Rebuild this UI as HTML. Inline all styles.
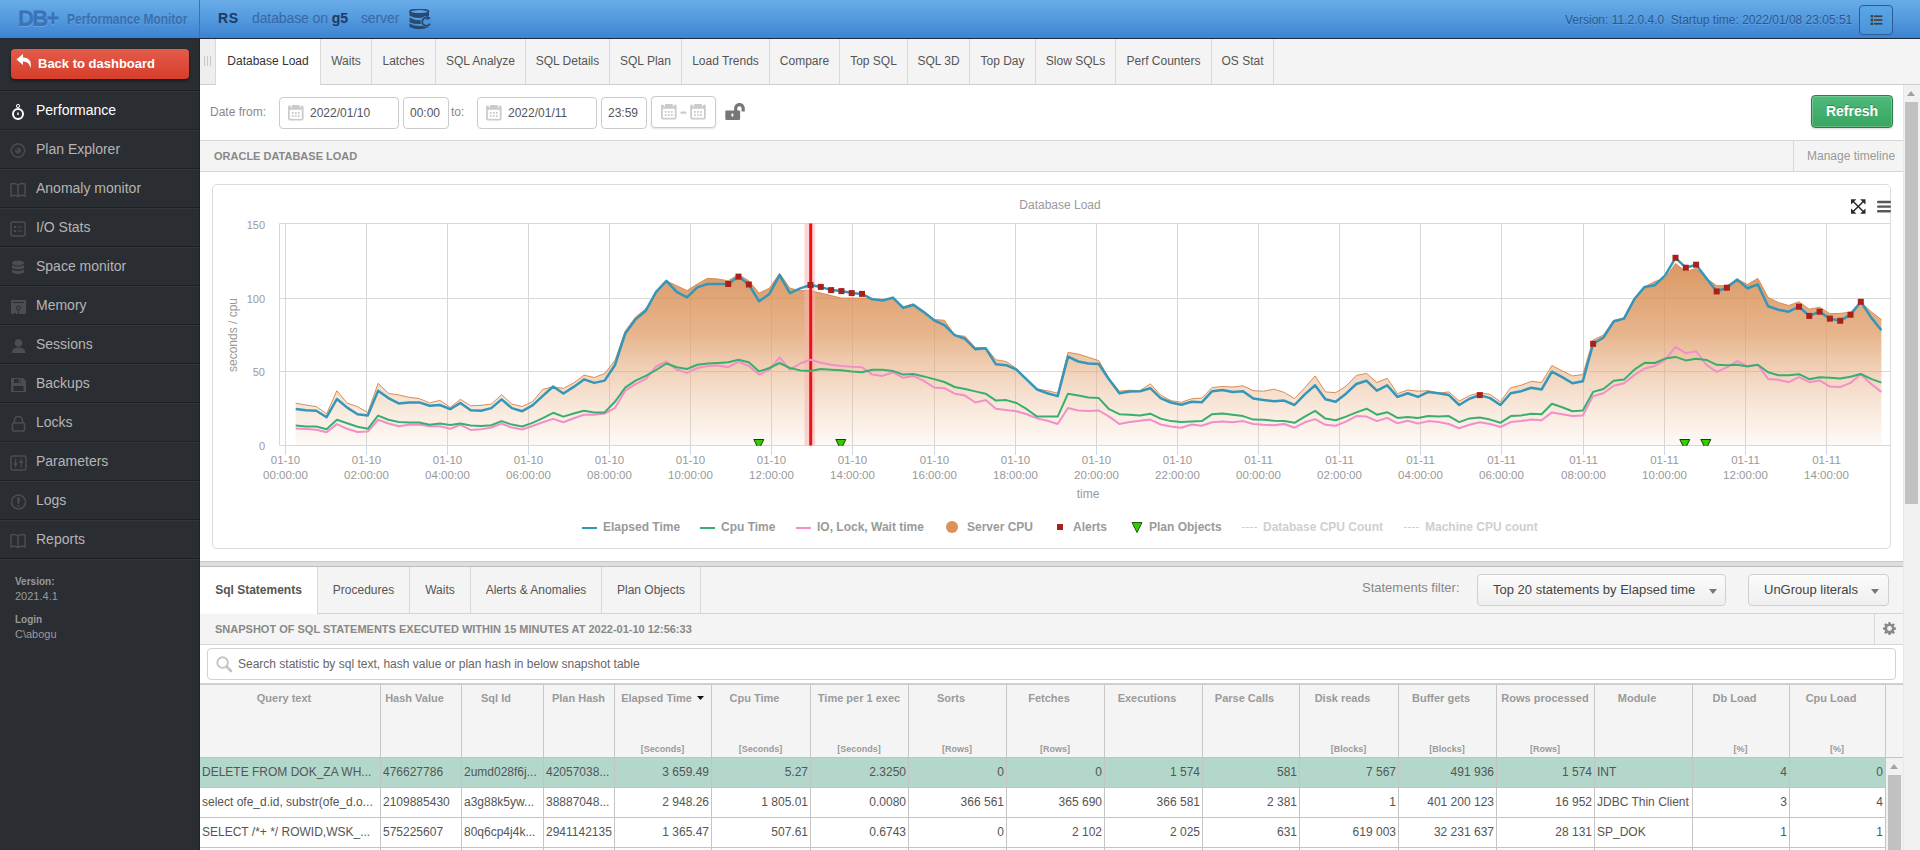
<!DOCTYPE html>
<html><head><meta charset="utf-8">
<style>
*{box-sizing:border-box;margin:0;padding:0}
html,body{width:1920px;height:850px;overflow:hidden;background:#fff;font-family:"Liberation Sans",sans-serif;}
.abs{position:absolute}
#hdr{position:absolute;left:0;top:0;width:1920px;height:39px;background:linear-gradient(#68ade7,#559cdf 45%,#3d82d1);border-bottom:1px solid #1c2b3b;}
#hdr .div{position:absolute;left:199px;top:0;width:1px;height:38px;background:#3f72aa}
.logo1{position:absolute;left:18px;top:6px;font-size:22px;font-weight:bold;color:#3a73b8;letter-spacing:-1.6px;text-shadow:0 1px 0 rgba(255,255,255,0.18),0 -1px 0 rgba(20,50,110,0.25)}
.logo2{position:absolute;left:67px;top:11px;font-size:14.5px;font-weight:bold;color:#3a6fae;transform:scaleX(0.825);transform-origin:0 0;white-space:nowrap;text-shadow:0 1px 0 rgba(255,255,255,0.12)}
.rs{position:absolute;left:218px;top:10px;font-size:14px;font-weight:bold;color:#1d3a60;letter-spacing:0.6px}
.dbon{position:absolute;left:252px;top:10px;font-size:14px;color:#3868a6;letter-spacing:-0.1px;white-space:nowrap}
.dbon b{color:#1d3a60}
.ver{position:absolute;left:1565px;top:12px;font-size:13px;color:#2a5891;transform:scaleX(0.923);transform-origin:0 0;white-space:nowrap;text-shadow:0 1px 0 rgba(255,255,255,0.15)}
.hbtn{position:absolute;left:1859px;top:5px;width:34px;height:30px;border:1px solid #2d5d96;border-radius:4px;background:linear-gradient(#5aa6e6,#4a94da)}
#side{position:absolute;left:0;top:39px;width:200px;height:811px;background:#2a2d32;border-right:1px solid #1f2226}
.back{position:absolute;left:11px;top:10px;width:178px;height:30px;border-radius:4px;background:linear-gradient(#e35c4a,#d63d2b);box-shadow:0 2px 3px rgba(0,0,0,0.45);color:#fff;font-weight:bold;font-size:13px}
.back span{position:absolute;left:27px;top:7px}
.mi{position:absolute;left:0;width:199px;height:39px;border-top:1px solid #1d1f23;box-shadow:inset 0 1px 0 #33363b;color:#b5b5b5;font-size:14px}
.mi span{position:absolute;left:36px;top:11px}
.mi svg{position:absolute;left:10px;top:12px}
.mi.act{color:#fff}
.sver{position:absolute;left:15px;font-size:10px;color:#999;font-weight:bold}
.sval{position:absolute;left:15px;font-size:11px;color:#999}
#tabs{position:absolute;left:200px;top:39px;width:1720px;height:46px;background:#f4f4f4;border-bottom:1px solid #cfcfcf}
.tb{position:absolute;top:0;height:45px;border-right:1px solid #d9d9d9;font-size:12px;color:#555;text-align:center;line-height:45px}
.tb.act{background:#fff;color:#333;height:46px}
#tool{position:absolute;left:200px;top:85px;width:1703px;height:56px;background:#fff;border-bottom:1px solid #d6d6d6}
.inp{position:absolute;top:12px;height:32px;border:1px solid #cbcbcb;border-radius:4px;background:#fff;font-size:12px;color:#555}
.lbl{position:absolute;font-size:12px;color:#888}
.refresh{position:absolute;left:1611px;top:10px;width:82px;height:33px;border:1px solid #2b7d4b;border-radius:4px;background:linear-gradient(#4dba7b,#39a560);text-shadow:0 -1px 0 rgba(0,0,0,0.25);color:#fff;font-weight:bold;font-size:14px;text-align:center;line-height:31px;box-shadow:inset 0 0 0 1px rgba(255,255,255,0.22),0 1px 2px rgba(0,0,0,0.15)}
#sech{position:absolute;left:200px;top:141px;width:1703px;height:31px;background:#f4f4f4;border-bottom:1px solid #d6d6d6}
.sect{position:absolute;left:14px;top:9px;font-size:11px;font-weight:bold;color:#888;white-space:nowrap}
.mng{position:absolute;left:1593px;top:0;width:110px;height:30px;border-left:1px solid #d9d9d9;font-size:12px;color:#999;padding-left:13px;line-height:31px}
#chartbox{position:absolute;left:212px;top:184px;width:1679px;height:365px;border:1px solid #dcdcdc;border-radius:5px;background:#fff}
.chart{position:absolute;left:0;top:0}
.legend{position:absolute;top:520px;font-size:12px;font-weight:bold;color:#9a9a9a;white-space:nowrap}
#divbar{position:absolute;left:200px;top:561px;width:1703px;height:6px;background:#dedede;border-top:1px solid #c9c9c9;border-bottom:1px solid #bdbdbd}
#btabs{position:absolute;left:200px;top:567px;width:1703px;height:47px;background:#f4f4f4;border-bottom:1px solid #d4d4d4}
.bt{position:absolute;top:0;height:46px;border-right:1px solid #d9d9d9;font-size:12px;color:#555;text-align:center;line-height:46px}
.bt.act{background:#fff;font-weight:bold;height:47px}
.sel{position:absolute;top:7px;height:32px;border:1px solid #cfcfcf;border-radius:4px;background:linear-gradient(#fbfbfb,#efefef);font-size:13px;color:#444;line-height:30px}
.caret{position:absolute;top:13.5px;width:0;height:0;border-left:4px solid transparent;border-right:4px solid transparent;border-top:5px solid #777}
#snap{position:absolute;left:200px;top:614px;width:1703px;height:31px;background:#f4f4f4;border-bottom:1px solid #d6d6d6}
#search{position:absolute;left:207px;top:648px;width:1689px;height:32px;border:1px solid #d3d3d3;border-radius:4px;background:#fff;font-size:12px;color:#666}
#thead{position:absolute;left:200px;top:683px;width:1703px;height:75px;background:#f4f4f4;border-top:2px solid #cfcfcf;border-bottom:1px solid #c2c2c2}
.th{position:absolute;top:0;height:72px;border-right:1px solid #c6c6c6;font-size:11px;font-weight:bold;color:#9a9a9a;text-align:center}
.th .u{position:absolute;left:0;right:0;top:59px;font-size:9px}
.th .t{position:absolute;left:0;right:0;top:7px;padding-right:12px;white-space:nowrap}
.row{position:absolute;left:200px;width:1686px;height:30px;border-bottom:1px solid #c4c4c4;font-size:12px;color:#555}
.row.g{background:#b3d7cb}
.td{position:absolute;top:0;height:29px;border-right:1px solid #c4c4c4;line-height:28px;white-space:nowrap;overflow:hidden;padding:0 2px}
.td.r{text-align:right}
#vscroll{position:absolute;left:1903px;top:85px;width:17px;height:765px;background:#f1f1f1;border-left:1px solid #e8e8e8}
#vthumb{position:absolute;left:1905px;top:102px;width:13px;height:402px;background:#c1c1c1}
.arr{position:absolute;width:0;height:0;border-left:4px solid transparent;border-right:4px solid transparent;border-bottom:5px solid #a3a3a3}
#tscroll{position:absolute;left:1886px;top:758px;width:17px;height:92px;background:#f1f1f1}
#tthumb{position:absolute;left:1888px;top:775px;width:13px;height:75px;background:#c1c1c1}
</style></head>
<body>
<div id="hdr"><div class="div"></div>
<div class="logo1">DB+</div><div class="logo2">Performance Monitor</div>
<div class="rs">RS</div>
<div class="dbon">database on <b>g5</b><span style="margin-left:13px">server</span></div>
<svg class="abs" style="left:409px;top:9px" width="23" height="21" viewBox="0 0 23 21"><g fill="#274a70"><ellipse cx="10.2" cy="2.6" rx="9.4" ry="2.3" fill="none" stroke="#274a70" stroke-width="1.6"/><path d="M0.5 3 V6.8 Q10.2 11.2 20 6.8 V3 Q10.2 7.4 0.5 3Z"/><path d="M0.5 8.4 V13.2 Q5.5 15.4 12 15 V11.2 Q5.5 11.6 0.5 8.4Z"/><path d="M0.5 14.4 V18 Q10.2 22.6 20 18 V16 Q15 17.4 12 17 Q5.5 17.4 0.5 14.4Z"/></g><circle cx="17.2" cy="12.6" r="5.6" fill="#4d93da"/><path d="M21 14.6 A4.1 4.1 0 1 1 19.2 9" fill="none" stroke="#274a70" stroke-width="1.9"/><path d="M17.6 6.6 L21.8 9 L17.6 11.2Z" fill="#274a70"/></svg>
<div class="ver">Version: 11.2.0.4.0&nbsp; Startup time: 2022/01/08 23:05:51</div>
<div class="hbtn"><svg class="abs" style="left:10px;top:9px" width="13" height="10" viewBox="0 0 14 12"><g fill="#404040"><rect x="0" y="0" width="3" height="3"/><rect x="4" y="0.5" width="10" height="2"/><rect x="0" y="4.5" width="3" height="3"/><rect x="4" y="5" width="10" height="2"/><rect x="0" y="9" width="3" height="3"/><rect x="4" y="9.5" width="10" height="2"/></g></svg></div>
</div>

<div id="side">
<div class="back"><svg class="abs" style="left:5px;top:4px" width="17" height="16" viewBox="0 0 17 16"><path d="M7 1 L0.5 6.5 L7 12 V8.5 Q13 8 14.5 15 Q16.5 5 7 4.5Z" fill="#fff"/></svg><span>Back to dashboard</span></div>
<div class="mi act" style="top:51px"><svg width="18" height="18" viewBox="0 0 18 18"><circle cx="8" cy="11" r="5" fill="none" stroke="#fff" stroke-width="2"/><circle cx="8" cy="3" r="1.6" fill="none" stroke="#fff" stroke-width="1"/><rect x="7.3" y="9.5" width="1.4" height="2.5" fill="#fff"/></svg><span>Performance</span></div>
<div class="mi" style="top:90px"><svg width="18" height="18" viewBox="0 0 18 18"><path d="M1 8.5 Q2.8 1.8 8 1.8 Q13.2 1.8 15 8.5 Q13.2 15.2 8 15.2 Q2.8 15.2 1 8.5Z" fill="none" stroke="#45484d" stroke-width="1.7"/><circle cx="8" cy="8.5" r="3" fill="#45484d"/><circle cx="7" cy="7.4" r="0.9" fill="#2a2d32"/></svg><span>Plan Explorer</span></div>
<div class="mi" style="top:129px"><svg width="18" height="18" viewBox="0 0 18 18"><path d="M1 3 Q4.5 1.5 8 4 Q11.5 1.5 15 3 V15 Q11.5 13.5 8 15.5 Q4.5 13.5 1 15Z M8 4 V15.5" fill="none" stroke="#4a4d52" stroke-width="1.5"/></svg><span>Anomaly monitor</span></div>
<div class="mi" style="top:168px"><svg width="18" height="18" viewBox="0 0 18 18"><rect x="1" y="2" width="14" height="14" rx="2" fill="none" stroke="#4a4d52" stroke-width="1.5"/><rect x="4" y="6" width="2" height="2" fill="#4a4d52"/><rect x="4" y="10" width="2" height="2" fill="#4a4d52"/><rect x="7.5" y="6.5" width="4.5" height="1" fill="#4a4d52"/><rect x="7.5" y="10.5" width="4.5" height="1" fill="#4a4d52"/></svg><span>I/O Stats</span></div>
<div class="mi" style="top:207px"><svg width="18" height="18" viewBox="0 0 18 18"><g fill="#4a4d52"><ellipse cx="8" cy="4" rx="6" ry="2.5"/><path d="M2 6 Q8 9 14 6 V9 Q8 12 2 9Z"/><path d="M2 10.5 Q8 13.5 14 10.5 V13.5 Q8 16.5 2 13.5Z"/></g></svg><span>Space monitor</span></div>
<div class="mi" style="top:246px"><svg width="18" height="18" viewBox="0 0 18 18"><rect x="1" y="2" width="15" height="14" rx="1" fill="#4a4d52"/><rect x="3" y="4" width="11" height="1" fill="#2a2d32"/><circle cx="8.5" cy="10" r="2" fill="none" stroke="#2a2d32" stroke-width="1"/><rect x="4" y="15" width="2" height="1" fill="#2a2d32"/><rect x="8" y="13" width="1" height="3" fill="#2a2d32"/></svg><span>Memory</span></div>
<div class="mi" style="top:285px"><svg width="18" height="18" viewBox="0 0 18 18"><circle cx="8.5" cy="6" r="3.8" fill="#4a4d52"/><path d="M1.5 16 Q2 10.5 8.5 10.5 Q15 10.5 15.5 16Z" fill="#4a4d52"/></svg><span>Sessions</span></div>
<div class="mi" style="top:324px"><svg width="18" height="18" viewBox="0 0 18 18"><path d="M1 2 H13 L16 5 V16 H1Z" fill="#4a4d52"/><rect x="4" y="3" width="7" height="4" fill="#2a2d32"/><rect x="8.5" y="3.5" width="2" height="3" fill="#4a4d52"/><rect x="3.5" y="10" width="10" height="5" fill="#2a2d32"/></svg><span>Backups</span></div>
<div class="mi" style="top:363px"><svg width="18" height="18" viewBox="0 0 18 18"><path d="M4.5 8 V5.5 A4 4 0 0 1 12.5 5.5 V8" fill="none" stroke="#4a4d52" stroke-width="1.6"/><rect x="2.5" y="8" width="12" height="8" rx="1" fill="none" stroke="#4a4d52" stroke-width="1.6"/></svg><span>Locks</span></div>
<div class="mi" style="top:402px"><svg width="18" height="18" viewBox="0 0 18 18"><rect x="1" y="2" width="15" height="14" rx="2" fill="none" stroke="#4a4d52" stroke-width="1.5"/><rect x="5" y="4.5" width="1.2" height="9" fill="#4a4d52"/><rect x="10.5" y="4.5" width="1.2" height="9" fill="#4a4d52"/><rect x="4" y="9" width="3.2" height="2" fill="#4a4d52"/><rect x="9.5" y="7" width="3.2" height="2" fill="#4a4d52"/></svg><span>Parameters</span></div>
<div class="mi" style="top:441px"><svg width="18" height="18" viewBox="0 0 18 18"><circle cx="8.5" cy="9" r="7" fill="none" stroke="#4a4d52" stroke-width="1.5"/><path d="M7 4.5 H10 L9.2 11 H7.8Z" fill="#4a4d52"/><circle cx="8.5" cy="13" r="1" fill="#4a4d52"/></svg><span>Logs</span></div>
<div class="mi" style="top:480px"><svg width="18" height="18" viewBox="0 0 18 18"><path d="M1 3 Q4.5 1.5 8 4 Q11.5 1.5 15 3 V15 Q11.5 13.5 8 15.5 Q4.5 13.5 1 15Z M8 4 V15.5" fill="none" stroke="#4a4d52" stroke-width="1.5"/></svg><span>Reports</span></div>
<div class="mi" style="top:519px;height:2px"></div>
<div class="sver" style="top:537px">Version:</div>
<div class="sval" style="top:551px">2021.4.1</div>
<div class="sver" style="top:575px">Login</div>
<div class="sval" style="top:589px">C\abogu</div>
</div>

<div id="tabs">
<div class="tb" style="left:0;width:16px;background:#eeeeee"><svg class="abs" style="left:4px;top:17px" width="7" height="10"><g fill="#c8c8c8"><rect x="0" y="0" width="1" height="10"/><rect x="3" y="0" width="1" height="10"/><rect x="6" y="0" width="1" height="10"/></g></svg></div>
<div class="tb act" style="left:16px;width:105px">Database Load</div>
<div class="tb" style="left:121px;width:51px">Waits</div>
<div class="tb" style="left:172px;width:64px">Latches</div>
<div class="tb" style="left:236px;width:90px">SQL Analyze</div>
<div class="tb" style="left:326px;width:84px">SQL Details</div>
<div class="tb" style="left:410px;width:72px">SQL Plan</div>
<div class="tb" style="left:482px;width:88px">Load Trends</div>
<div class="tb" style="left:570px;width:70px">Compare</div>
<div class="tb" style="left:640px;width:68px">Top SQL</div>
<div class="tb" style="left:708px;width:62px">SQL 3D</div>
<div class="tb" style="left:770px;width:66px">Top Day</div>
<div class="tb" style="left:836px;width:80px">Slow SQLs</div>
<div class="tb" style="left:916px;width:96px">Perf Counters</div>
<div class="tb" style="left:1012px;width:62px">OS Stat</div>
</div>

<div id="tool">
<div class="lbl" style="left:10px;top:20px">Date from:</div>
<div class="inp" style="left:79px;width:120px"><svg class="abs" style="left:8px;top:7px" width="16" height="16" viewBox="0 0 16 16"><rect x="0" y="0" width="15.6" height="15.6" rx="2.6" fill="#cbcbcb"/><rect x="1.8" y="4.8" width="12" height="9" fill="#fff"/><g fill="#cbcbcb"><rect x="3.8" y="7" width="1.8" height="1.8"/><rect x="6.9" y="7" width="1.8" height="1.8"/><rect x="9.9" y="7" width="1.8" height="1.8"/><rect x="3.8" y="10.1" width="1.8" height="1.8"/><rect x="6.9" y="10.1" width="1.8" height="1.8"/><rect x="9.9" y="10.1" width="1.8" height="1.8"/></g><g fill="#fff"><rect x="1.6" y="0" width="2" height="1"/><rect x="12" y="0" width="2" height="1"/></g><g fill="#fff"><rect x="3" y="0" width="0.9" height="2.6"/><rect x="11.7" y="0" width="0.9" height="2.6"/></g></svg><span class="abs" style="left:30px;top:8px">2022/01/10</span></div>
<div class="inp" style="left:203px;width:46px"><span class="abs" style="left:6px;top:8px">00:00</span></div>
<div class="lbl" style="left:251px;top:20px">to:</div>
<div class="inp" style="left:277px;width:120px"><svg class="abs" style="left:8px;top:7px" width="16" height="16" viewBox="0 0 16 16"><rect x="0" y="0" width="15.6" height="15.6" rx="2.6" fill="#cbcbcb"/><rect x="1.8" y="4.8" width="12" height="9" fill="#fff"/><g fill="#cbcbcb"><rect x="3.8" y="7" width="1.8" height="1.8"/><rect x="6.9" y="7" width="1.8" height="1.8"/><rect x="9.9" y="7" width="1.8" height="1.8"/><rect x="3.8" y="10.1" width="1.8" height="1.8"/><rect x="6.9" y="10.1" width="1.8" height="1.8"/><rect x="9.9" y="10.1" width="1.8" height="1.8"/></g><g fill="#fff"><rect x="1.6" y="0" width="2" height="1"/><rect x="12" y="0" width="2" height="1"/></g><g fill="#fff"><rect x="3" y="0" width="0.9" height="2.6"/><rect x="11.7" y="0" width="0.9" height="2.6"/></g></svg><span class="abs" style="left:30px;top:8px">2022/01/11</span></div>
<div class="inp" style="left:401px;width:46px"><span class="abs" style="left:6px;top:8px">23:59</span></div>
<div class="inp" style="left:451px;width:65px;top:11px;box-shadow:0 1px 2px rgba(0,0,0,0.12)"><svg class="abs" style="left:9px;top:7px" width="46" height="17" viewBox="0 0 46 17"><g transform="translate(0 0)"><rect x="0" y="0" width="15.6" height="15.6" rx="2.6" fill="#cbcbcb"/><rect x="1.8" y="4.8" width="12" height="9" fill="#fff"/><g fill="#cbcbcb"><rect x="3.8" y="7" width="1.8" height="1.8"/><rect x="6.9" y="7" width="1.8" height="1.8"/><rect x="9.9" y="7" width="1.8" height="1.8"/><rect x="3.8" y="10.1" width="1.8" height="1.8"/><rect x="6.9" y="10.1" width="1.8" height="1.8"/><rect x="9.9" y="10.1" width="1.8" height="1.8"/></g><g fill="#fff"><rect x="1.6" y="0" width="2" height="1"/><rect x="12" y="0" width="2" height="1"/><rect x="3" y="0" width="0.9" height="2.6"/><rect x="11.7" y="0" width="0.9" height="2.6"/></g></g><g transform="translate(29.2 0)"><rect x="0" y="0" width="15.6" height="15.6" rx="2.6" fill="#cbcbcb"/><rect x="1.8" y="4.8" width="12" height="9" fill="#fff"/><g fill="#cbcbcb"><rect x="3.8" y="7" width="1.8" height="1.8"/><rect x="6.9" y="7" width="1.8" height="1.8"/><rect x="9.9" y="7" width="1.8" height="1.8"/><rect x="3.8" y="10.1" width="1.8" height="1.8"/><rect x="6.9" y="10.1" width="1.8" height="1.8"/><rect x="9.9" y="10.1" width="1.8" height="1.8"/></g><g fill="#fff"><rect x="1.6" y="0" width="2" height="1"/><rect x="12" y="0" width="2" height="1"/><rect x="3" y="0" width="0.9" height="2.6"/><rect x="11.7" y="0" width="0.9" height="2.6"/></g></g><path d="M19 8.7 L20.2 7.6 H24.6 L25.8 8.7 L24.6 9.8 H20.2Z" fill="#cbcbcb"/></svg></div>
<svg class="abs" style="left:525px;top:18px" width="21" height="18" viewBox="0 0 21 18"><path d="M10.7 8.2 V5.3 A3.75 3.75 0 0 1 18.2 5.3 V8.6" fill="none" stroke="#777" stroke-width="3.2"/><rect x="0.3" y="7.6" width="14.8" height="9.3" rx="0.8" fill="#777"/><ellipse cx="7.4" cy="12" rx="1.1" ry="1.8" fill="#fff"/></svg>
<div class="refresh">Refresh</div>
</div>

<div id="sech"><div class="sect">ORACLE DATABASE LOAD</div><div class="mng">Manage timeline</div></div>

<div id="chartbox"></div>
<svg class="chart" width="1920" height="850" viewBox="0 0 1920 850">
<defs>
<linearGradient id="og" gradientUnits="userSpaceOnUse" x1="0" y1="223" x2="0" y2="445">
<stop offset="0" stop-color="#cf7f40" stop-opacity="0.95"/>
<stop offset="0.5" stop-color="#df9c66" stop-opacity="0.75"/>
<stop offset="1" stop-color="#f0c8a8" stop-opacity="0.12"/>
</linearGradient>
<clipPath id="pc"><rect x="279.5" y="215" width="1610.5" height="231"/></clipPath>
</defs>
<g stroke="#d8d8d8" stroke-width="1"><line x1="285.5" y1="223.5" x2="285.5" y2="445.5"/><line x1="366.5" y1="223.5" x2="366.5" y2="445.5"/><line x1="447.5" y1="223.5" x2="447.5" y2="445.5"/><line x1="528.5" y1="223.5" x2="528.5" y2="445.5"/><line x1="609.5" y1="223.5" x2="609.5" y2="445.5"/><line x1="690.5" y1="223.5" x2="690.5" y2="445.5"/><line x1="771.5" y1="223.5" x2="771.5" y2="445.5"/><line x1="852.5" y1="223.5" x2="852.5" y2="445.5"/><line x1="934.5" y1="223.5" x2="934.5" y2="445.5"/><line x1="1015.5" y1="223.5" x2="1015.5" y2="445.5"/><line x1="1096.5" y1="223.5" x2="1096.5" y2="445.5"/><line x1="1177.5" y1="223.5" x2="1177.5" y2="445.5"/><line x1="1258.5" y1="223.5" x2="1258.5" y2="445.5"/><line x1="1339.5" y1="223.5" x2="1339.5" y2="445.5"/><line x1="1420.5" y1="223.5" x2="1420.5" y2="445.5"/><line x1="1501.5" y1="223.5" x2="1501.5" y2="445.5"/><line x1="1583.5" y1="223.5" x2="1583.5" y2="445.5"/><line x1="1664.5" y1="223.5" x2="1664.5" y2="445.5"/><line x1="1745.5" y1="223.5" x2="1745.5" y2="445.5"/><line x1="1826.5" y1="223.5" x2="1826.5" y2="445.5"/><line x1="279.5" y1="223.5" x2="1890" y2="223.5"/><line x1="279.5" y1="298.5" x2="1890" y2="298.5"/><line x1="279.5" y1="371.5" x2="1890" y2="371.5"/><line x1="279.5" y1="445.5" x2="1890" y2="445.5"/>
<line x1="279.5" y1="223.5" x2="279.5" y2="445.5"/></g>
<g stroke="#ccd6eb" stroke-width="1"><line x1="285.5" y1="446" x2="285.5" y2="455"/><line x1="366.5" y1="446" x2="366.5" y2="455"/><line x1="447.5" y1="446" x2="447.5" y2="455"/><line x1="528.5" y1="446" x2="528.5" y2="455"/><line x1="609.5" y1="446" x2="609.5" y2="455"/><line x1="690.5" y1="446" x2="690.5" y2="455"/><line x1="771.5" y1="446" x2="771.5" y2="455"/><line x1="852.5" y1="446" x2="852.5" y2="455"/><line x1="934.5" y1="446" x2="934.5" y2="455"/><line x1="1015.5" y1="446" x2="1015.5" y2="455"/><line x1="1096.5" y1="446" x2="1096.5" y2="455"/><line x1="1177.5" y1="446" x2="1177.5" y2="455"/><line x1="1258.5" y1="446" x2="1258.5" y2="455"/><line x1="1339.5" y1="446" x2="1339.5" y2="455"/><line x1="1420.5" y1="446" x2="1420.5" y2="455"/><line x1="1501.5" y1="446" x2="1501.5" y2="455"/><line x1="1583.5" y1="446" x2="1583.5" y2="455"/><line x1="1664.5" y1="446" x2="1664.5" y2="455"/><line x1="1745.5" y1="446" x2="1745.5" y2="455"/><line x1="1826.5" y1="446" x2="1826.5" y2="455"/></g>
<g clip-path="url(#pc)">
<path d="M295.7 403.2 L306.0 405.0 L316.3 406.6 L326.6 413.8 L336.9 390.7 L347.2 403.2 L357.5 406.6 L367.8 412.6 L378.1 383.3 L388.4 393.4 L398.7 394.9 L409.0 397.3 L419.3 398.6 L429.6 402.9 L439.9 400.4 L450.2 407.3 L460.4 399.4 L470.7 405.8 L481.0 405.3 L491.3 404.1 L501.6 394.7 L511.9 404.1 L522.2 406.5 L532.5 401.8 L542.8 389.3 L553.1 386.9 L563.4 388.4 L573.7 382.9 L584.0 375.2 L594.3 377.5 L604.6 373.5 L614.9 360.6 L625.2 331.2 L635.5 317.1 L645.8 308.8 L656.1 293.5 L666.4 280.8 L676.7 285.7 L687.0 290.6 L697.3 284.0 L707.6 278.3 L717.9 279.0 L728.2 280.8 L738.5 274.6 L748.8 280.8 L759.1 293.1 L769.4 288.2 L779.6 273.3 L789.9 288.2 L800.2 290.6 L810.5 290.6 L820.8 293.1 L831.1 295.6 L841.4 298.1 L851.7 298.1 L862.0 298.1 L872.3 298.8 L882.6 299.3 L892.9 299.3 L903.2 306.7 L913.5 303.7 L923.8 311.6 L934.1 319.5 L944.4 320.3 L954.7 335.1 L965.0 336.3 L975.3 347.5 L985.6 347.5 L995.9 359.8 L1006.2 361.5 L1016.5 368.5 L1026.8 379.6 L1037.1 389.0 L1047.4 390.7 L1057.7 393.2 L1068.0 352.4 L1078.3 354.1 L1088.5 357.3 L1098.8 360.6 L1109.1 378.3 L1119.4 391.2 L1129.7 390.2 L1140.0 390.7 L1150.3 383.8 L1160.6 395.1 L1170.9 400.6 L1181.2 402.3 L1191.5 398.8 L1201.8 398.1 L1212.1 387.5 L1222.4 386.5 L1232.7 387.0 L1243.0 385.8 L1253.3 390.7 L1263.6 391.2 L1273.9 389.2 L1284.2 392.4 L1294.5 398.6 L1304.8 387.7 L1315.1 375.9 L1325.4 391.9 L1335.7 392.7 L1346.0 386.2 L1356.3 375.4 L1366.6 373.4 L1376.9 382.5 L1387.2 378.3 L1397.5 393.7 L1407.7 390.0 L1418.0 391.2 L1428.3 390.7 L1438.6 393.2 L1448.9 391.9 L1459.2 401.1 L1469.5 395.6 L1479.8 392.7 L1490.1 394.4 L1500.4 401.8 L1510.7 387.7 L1521.0 385.3 L1531.3 381.3 L1541.6 382.5 L1551.9 365.5 L1562.2 370.9 L1572.5 375.9 L1582.8 374.6 L1593.1 340.0 L1603.4 335.1 L1613.7 320.3 L1624.0 317.8 L1634.3 298.1 L1644.6 286.9 L1654.9 281.5 L1665.2 278.3 L1675.5 263.5 L1685.8 271.6 L1696.1 268.4 L1706.4 278.3 L1716.7 285.7 L1726.9 285.7 L1737.2 279.1 L1747.5 284.5 L1757.8 278.3 L1768.1 297.4 L1778.4 302.5 L1788.7 305.5 L1799.0 301.8 L1809.3 309.2 L1819.6 307.2 L1829.9 313.7 L1840.2 313.4 L1850.5 312.2 L1860.8 301.8 L1871.1 311.7 L1881.4 319.6 L1881.4 445.2 L295.7 445.2 Z" fill="url(#og)" stroke="none"/>
<path d="M295.7 403.2 L306.0 405.0 L316.3 406.6 L326.6 413.8 L336.9 390.7 L347.2 403.2 L357.5 406.6 L367.8 412.6 L378.1 383.3 L388.4 393.4 L398.7 394.9 L409.0 397.3 L419.3 398.6 L429.6 402.9 L439.9 400.4 L450.2 407.3 L460.4 399.4 L470.7 405.8 L481.0 405.3 L491.3 404.1 L501.6 394.7 L511.9 404.1 L522.2 406.5 L532.5 401.8 L542.8 389.3 L553.1 386.9 L563.4 388.4 L573.7 382.9 L584.0 375.2 L594.3 377.5 L604.6 373.5 L614.9 360.6 L625.2 331.2 L635.5 317.1 L645.8 308.8 L656.1 293.5 L666.4 280.8 L676.7 285.7 L687.0 290.6 L697.3 284.0 L707.6 278.3 L717.9 279.0 L728.2 280.8 L738.5 274.6 L748.8 280.8 L759.1 293.1 L769.4 288.2 L779.6 273.3 L789.9 288.2 L800.2 290.6 L810.5 290.6 L820.8 293.1 L831.1 295.6 L841.4 298.1 L851.7 298.1 L862.0 298.1 L872.3 298.8 L882.6 299.3 L892.9 299.3 L903.2 306.7 L913.5 303.7 L923.8 311.6 L934.1 319.5 L944.4 320.3 L954.7 335.1 L965.0 336.3 L975.3 347.5 L985.6 347.5 L995.9 359.8 L1006.2 361.5 L1016.5 368.5 L1026.8 379.6 L1037.1 389.0 L1047.4 390.7 L1057.7 393.2 L1068.0 352.4 L1078.3 354.1 L1088.5 357.3 L1098.8 360.6 L1109.1 378.3 L1119.4 391.2 L1129.7 390.2 L1140.0 390.7 L1150.3 383.8 L1160.6 395.1 L1170.9 400.6 L1181.2 402.3 L1191.5 398.8 L1201.8 398.1 L1212.1 387.5 L1222.4 386.5 L1232.7 387.0 L1243.0 385.8 L1253.3 390.7 L1263.6 391.2 L1273.9 389.2 L1284.2 392.4 L1294.5 398.6 L1304.8 387.7 L1315.1 375.9 L1325.4 391.9 L1335.7 392.7 L1346.0 386.2 L1356.3 375.4 L1366.6 373.4 L1376.9 382.5 L1387.2 378.3 L1397.5 393.7 L1407.7 390.0 L1418.0 391.2 L1428.3 390.7 L1438.6 393.2 L1448.9 391.9 L1459.2 401.1 L1469.5 395.6 L1479.8 392.7 L1490.1 394.4 L1500.4 401.8 L1510.7 387.7 L1521.0 385.3 L1531.3 381.3 L1541.6 382.5 L1551.9 365.5 L1562.2 370.9 L1572.5 375.9 L1582.8 374.6 L1593.1 340.0 L1603.4 335.1 L1613.7 320.3 L1624.0 317.8 L1634.3 298.1 L1644.6 286.9 L1654.9 281.5 L1665.2 278.3 L1675.5 263.5 L1685.8 271.6 L1696.1 268.4 L1706.4 278.3 L1716.7 285.7 L1726.9 285.7 L1737.2 279.1 L1747.5 284.5 L1757.8 278.3 L1768.1 297.4 L1778.4 302.5 L1788.7 305.5 L1799.0 301.8 L1809.3 309.2 L1819.6 307.2 L1829.9 313.7 L1840.2 313.4 L1850.5 312.2 L1860.8 301.8 L1871.1 311.7 L1881.4 319.6" fill="none" stroke="#d98c55" stroke-width="1"/>
<rect x="804.5" y="223.5" width="10.6" height="222" fill="#f7b5b5" fill-opacity="0.55"/>
<rect x="809.2" y="223.5" width="3" height="222" fill="#ee1111"/>
<path d="M295.7 428.6 L306.0 429.0 L316.3 429.7 L326.6 432.3 L336.9 424.1 L347.2 428.8 L357.5 432.0 L367.8 431.5 L378.1 419.8 L388.4 423.5 L398.7 426.2 L409.0 424.8 L419.3 424.6 L429.6 426.2 L439.9 426.2 L450.2 428.8 L460.4 424.8 L470.7 429.9 L481.0 429.3 L491.3 427.6 L501.6 423.6 L511.9 427.6 L522.2 429.5 L532.5 426.0 L542.8 422.2 L553.1 418.9 L563.4 422.2 L573.7 418.2 L584.0 414.7 L594.3 414.7 L604.6 413.5 L614.9 408.1 L625.2 390.7 L635.5 384.1 L645.8 378.9 L656.1 366.5 L666.4 361.5 L676.7 369.7 L687.0 372.9 L697.3 368.0 L707.6 366.0 L717.9 365.5 L728.2 367.2 L738.5 361.8 L748.8 366.0 L759.1 374.6 L769.4 369.7 L779.6 357.3 L789.9 369.7 L800.2 363.5 L810.5 359.8 L820.8 362.8 L831.1 364.8 L841.4 366.0 L851.7 366.7 L862.0 367.2 L872.3 374.6 L882.6 375.9 L892.9 372.2 L903.2 377.8 L913.5 375.9 L923.8 380.8 L934.1 387.5 L944.4 388.2 L954.7 393.7 L965.0 395.6 L975.3 402.5 L985.6 400.1 L995.9 408.7 L1006.2 410.0 L1016.5 411.2 L1026.8 414.2 L1037.1 418.4 L1047.4 420.8 L1057.7 424.0 L1068.0 408.0 L1078.3 410.5 L1088.5 410.9 L1098.8 410.5 L1109.1 416.6 L1119.4 424.0 L1129.7 422.1 L1140.0 420.8 L1150.3 419.6 L1160.6 424.5 L1170.9 426.5 L1181.2 427.7 L1191.5 424.5 L1201.8 425.8 L1212.1 422.3 L1222.4 421.6 L1232.7 422.3 L1243.0 421.1 L1253.3 424.0 L1263.6 424.8 L1273.9 425.3 L1284.2 424.0 L1294.5 427.7 L1304.8 422.3 L1315.1 419.1 L1325.4 424.8 L1335.7 425.8 L1346.0 421.6 L1356.3 416.1 L1366.6 416.6 L1376.9 421.1 L1387.2 417.9 L1397.5 423.3 L1407.7 420.8 L1418.0 423.5 L1428.3 421.1 L1438.6 422.1 L1448.9 424.0 L1459.2 428.2 L1469.5 424.8 L1479.8 422.3 L1490.1 424.0 L1500.4 427.0 L1510.7 422.1 L1521.0 421.1 L1531.3 419.6 L1541.6 420.3 L1551.9 412.4 L1562.2 414.2 L1572.5 416.1 L1582.8 415.4 L1593.1 396.1 L1603.4 393.2 L1613.7 385.8 L1624.0 383.3 L1634.3 375.1 L1644.6 368.5 L1654.9 366.0 L1665.2 359.8 L1675.5 346.8 L1685.8 353.2 L1696.1 351.2 L1706.4 364.8 L1716.7 371.8 L1726.9 367.3 L1737.2 361.1 L1747.5 366.1 L1757.8 364.8 L1768.1 378.9 L1778.4 379.7 L1788.7 382.2 L1799.0 377.2 L1809.3 382.2 L1819.6 380.4 L1829.9 386.6 L1840.2 387.1 L1850.5 382.9 L1860.8 374.2 L1871.1 383.9 L1881.4 392.0" fill="none" stroke="#f28fcb" stroke-width="2" stroke-linejoin="round"/>
<path d="M295.7 425.4 L306.0 426.5 L316.3 426.5 L326.6 429.3 L336.9 419.8 L347.2 423.3 L357.5 426.7 L367.8 428.8 L378.1 415.6 L388.4 419.8 L398.7 421.9 L409.0 422.5 L419.3 422.5 L429.6 424.8 L439.9 423.5 L450.2 425.1 L460.4 423.5 L470.7 425.4 L481.0 426.0 L491.3 425.3 L501.6 421.1 L511.9 424.6 L522.2 426.5 L532.5 422.9 L542.8 418.2 L553.1 412.8 L563.4 416.6 L573.7 413.5 L584.0 410.7 L594.3 412.4 L604.6 412.4 L614.9 401.8 L625.2 387.6 L635.5 380.6 L645.8 375.9 L656.1 370.0 L666.4 363.5 L676.7 367.2 L687.0 369.0 L697.3 364.8 L707.6 363.5 L717.9 363.0 L728.2 362.3 L738.5 359.8 L748.8 362.3 L759.1 371.4 L769.4 368.0 L779.6 363.0 L789.9 368.0 L800.2 370.4 L810.5 370.9 L820.8 369.0 L831.1 369.7 L841.4 370.2 L851.7 371.4 L862.0 372.2 L872.3 369.7 L882.6 369.7 L892.9 370.9 L903.2 374.6 L913.5 374.1 L923.8 376.4 L934.1 379.1 L944.4 382.0 L954.7 387.0 L965.0 389.0 L975.3 391.4 L985.6 393.7 L995.9 400.6 L1006.2 400.1 L1016.5 403.0 L1026.8 409.2 L1037.1 416.6 L1047.4 416.6 L1057.7 416.6 L1068.0 393.7 L1078.3 395.6 L1088.5 397.4 L1098.8 398.1 L1109.1 409.2 L1119.4 414.2 L1129.7 414.7 L1140.0 415.4 L1150.3 413.7 L1160.6 418.6 L1170.9 421.1 L1181.2 422.1 L1191.5 421.6 L1201.8 421.1 L1212.1 414.2 L1222.4 413.4 L1232.7 414.7 L1243.0 416.1 L1253.3 419.6 L1263.6 419.8 L1273.9 420.8 L1284.2 421.1 L1294.5 422.8 L1304.8 416.6 L1315.1 410.9 L1325.4 418.6 L1335.7 420.3 L1346.0 416.6 L1356.3 412.4 L1366.6 408.7 L1376.9 414.7 L1387.2 412.2 L1397.5 417.9 L1407.7 417.1 L1418.0 417.9 L1428.3 416.1 L1438.6 416.6 L1448.9 416.1 L1459.2 422.1 L1469.5 418.4 L1479.8 417.4 L1490.1 419.6 L1500.4 422.8 L1510.7 416.1 L1521.0 415.4 L1531.3 413.7 L1541.6 414.2 L1551.9 403.8 L1562.2 407.2 L1572.5 411.2 L1582.8 410.5 L1593.1 391.9 L1603.4 389.0 L1613.7 380.8 L1624.0 379.6 L1634.3 369.7 L1644.6 362.8 L1654.9 363.0 L1665.2 358.6 L1675.5 356.9 L1685.8 360.4 L1696.1 358.7 L1706.4 359.9 L1716.7 364.8 L1726.9 365.3 L1737.2 364.8 L1747.5 366.6 L1757.8 364.8 L1768.1 372.3 L1778.4 375.2 L1788.7 375.2 L1799.0 374.2 L1809.3 379.2 L1819.6 377.2 L1829.9 377.7 L1840.2 378.4 L1850.5 376.7 L1860.8 374.0 L1871.1 378.9 L1881.4 382.6" fill="none" stroke="#3aae6e" stroke-width="2" stroke-linejoin="round"/>
<path d="M295.7 408.9 L306.0 410.3 L316.3 410.8 L326.6 417.2 L336.9 399.0 L347.2 407.6 L357.5 414.2 L367.8 415.6 L378.1 390.7 L388.4 398.1 L398.7 403.4 L409.0 402.6 L419.3 402.4 L429.6 405.7 L439.9 405.0 L450.2 409.2 L460.4 402.9 L470.7 410.3 L481.0 410.7 L491.3 408.1 L501.6 399.4 L511.9 408.1 L522.2 411.2 L532.5 405.3 L542.8 395.9 L553.1 386.5 L563.4 393.5 L573.7 386.9 L584.0 379.4 L594.3 382.9 L604.6 380.6 L614.9 365.3 L625.2 333.5 L635.5 319.4 L645.8 310.7 L656.1 291.9 L666.4 280.8 L676.7 291.9 L687.0 297.3 L697.3 287.4 L707.6 284.0 L717.9 284.0 L728.2 284.0 L738.5 276.6 L748.8 284.5 L759.1 301.3 L769.4 293.9 L779.6 275.1 L789.9 293.1 L800.2 288.4 L810.5 285.0 L820.8 286.9 L831.1 290.1 L841.4 291.1 L851.7 293.1 L862.0 293.9 L872.3 299.3 L882.6 300.5 L892.9 297.6 L903.2 307.9 L913.5 305.0 L923.8 312.1 L934.1 320.3 L944.4 325.2 L954.7 335.1 L965.0 338.8 L975.3 349.2 L985.6 348.2 L995.9 364.3 L1006.2 365.2 L1016.5 369.7 L1026.8 379.6 L1037.1 389.5 L1047.4 393.2 L1057.7 396.1 L1068.0 356.6 L1078.3 361.5 L1088.5 363.5 L1098.8 364.0 L1109.1 379.6 L1119.4 393.2 L1129.7 391.4 L1140.0 391.2 L1150.3 388.2 L1160.6 398.1 L1170.9 402.5 L1181.2 404.8 L1191.5 401.8 L1201.8 402.3 L1212.1 391.2 L1222.4 390.0 L1232.7 391.9 L1243.0 391.2 L1253.3 398.6 L1263.6 400.1 L1273.9 401.3 L1284.2 400.6 L1294.5 405.0 L1304.8 394.4 L1315.1 385.3 L1325.4 399.3 L1335.7 401.8 L1346.0 393.7 L1356.3 384.0 L1366.6 380.8 L1376.9 390.7 L1387.2 385.3 L1397.5 396.9 L1407.7 393.2 L1418.0 396.9 L1428.3 391.9 L1438.6 393.2 L1448.9 395.1 L1459.2 405.0 L1469.5 398.8 L1479.8 395.1 L1490.1 398.1 L1500.4 405.0 L1510.7 393.2 L1521.0 391.2 L1531.3 387.7 L1541.6 389.5 L1551.9 371.7 L1562.2 377.1 L1572.5 383.3 L1582.8 381.3 L1593.1 343.8 L1603.4 337.6 L1613.7 321.5 L1624.0 318.6 L1634.3 299.3 L1644.6 286.9 L1654.9 285.2 L1665.2 275.3 L1675.5 257.8 L1685.8 267.7 L1696.1 264.7 L1706.4 278.3 L1716.7 291.4 L1726.9 287.7 L1737.2 279.6 L1747.5 288.2 L1757.8 284.5 L1768.1 306.3 L1778.4 309.7 L1788.7 311.7 L1799.0 306.7 L1809.3 315.9 L1819.6 311.7 L1829.9 318.6 L1840.2 320.8 L1850.5 314.7 L1860.8 301.8 L1871.1 317.4 L1881.4 330.2" fill="none" stroke="#3497ba" stroke-width="2.5" stroke-linejoin="round"/>
<g fill="#a8211b"><rect x="725.2" y="281.0" width="6" height="6"/><rect x="735.5" y="273.6" width="6" height="6"/><rect x="745.8" y="281.5" width="6" height="6"/><rect x="807.5" y="282.0" width="6" height="6"/><rect x="817.8" y="283.9" width="6" height="6"/><rect x="828.1" y="287.1" width="6" height="6"/><rect x="838.4" y="288.1" width="6" height="6"/><rect x="848.7" y="290.1" width="6" height="6"/><rect x="859.0" y="290.9" width="6" height="6"/><rect x="1476.8" y="392.1" width="6" height="6"/><rect x="1590.1" y="340.8" width="6" height="6"/><rect x="1672.5" y="254.8" width="6" height="6"/><rect x="1682.8" y="264.7" width="6" height="6"/><rect x="1693.1" y="261.7" width="6" height="6"/><rect x="1713.7" y="288.4" width="6" height="6"/><rect x="1723.9" y="284.7" width="6" height="6"/><rect x="1796.0" y="303.7" width="6" height="6"/><rect x="1806.3" y="312.9" width="6" height="6"/><rect x="1816.6" y="308.7" width="6" height="6"/><rect x="1826.9" y="315.6" width="6" height="6"/><rect x="1837.2" y="317.8" width="6" height="6"/><rect x="1847.5" y="311.7" width="6" height="6"/><rect x="1857.8" y="298.8" width="6" height="6"/></g>
<g fill="#33cc00" stroke="#173d0e" stroke-width="1"><path d="M753.8 439.5 L763.8 439.5 L758.8 449.5 Z"/><path d="M835.8 439.5 L845.8 439.5 L840.8 449.5 Z"/><path d="M1679.8 439.5 L1689.8 439.5 L1684.8 449.5 Z"/><path d="M1700.8 439.5 L1710.8 439.5 L1705.8 449.5 Z"/></g>
</g>
<g font-family="Liberation Sans, sans-serif" font-size="11" fill="#999"><text x="265" y="229.0" text-anchor="end">150</text><text x="265" y="302.8" text-anchor="end">100</text><text x="265" y="376.0" text-anchor="end">50</text><text x="265" y="449.8" text-anchor="end">0</text></g>
<g font-family="Liberation Sans, sans-serif" font-size="11.5" fill="#999"><text x="285.5" y="464" text-anchor="middle">01-10</text><text x="285.5" y="479" text-anchor="middle">00:00:00</text><text x="366.5" y="464" text-anchor="middle">01-10</text><text x="366.5" y="479" text-anchor="middle">02:00:00</text><text x="447.5" y="464" text-anchor="middle">01-10</text><text x="447.5" y="479" text-anchor="middle">04:00:00</text><text x="528.5" y="464" text-anchor="middle">01-10</text><text x="528.5" y="479" text-anchor="middle">06:00:00</text><text x="609.5" y="464" text-anchor="middle">01-10</text><text x="609.5" y="479" text-anchor="middle">08:00:00</text><text x="690.5" y="464" text-anchor="middle">01-10</text><text x="690.5" y="479" text-anchor="middle">10:00:00</text><text x="771.5" y="464" text-anchor="middle">01-10</text><text x="771.5" y="479" text-anchor="middle">12:00:00</text><text x="852.5" y="464" text-anchor="middle">01-10</text><text x="852.5" y="479" text-anchor="middle">14:00:00</text><text x="934.5" y="464" text-anchor="middle">01-10</text><text x="934.5" y="479" text-anchor="middle">16:00:00</text><text x="1015.5" y="464" text-anchor="middle">01-10</text><text x="1015.5" y="479" text-anchor="middle">18:00:00</text><text x="1096.5" y="464" text-anchor="middle">01-10</text><text x="1096.5" y="479" text-anchor="middle">20:00:00</text><text x="1177.5" y="464" text-anchor="middle">01-10</text><text x="1177.5" y="479" text-anchor="middle">22:00:00</text><text x="1258.5" y="464" text-anchor="middle">01-11</text><text x="1258.5" y="479" text-anchor="middle">00:00:00</text><text x="1339.5" y="464" text-anchor="middle">01-11</text><text x="1339.5" y="479" text-anchor="middle">02:00:00</text><text x="1420.5" y="464" text-anchor="middle">01-11</text><text x="1420.5" y="479" text-anchor="middle">04:00:00</text><text x="1501.5" y="464" text-anchor="middle">01-11</text><text x="1501.5" y="479" text-anchor="middle">06:00:00</text><text x="1583.5" y="464" text-anchor="middle">01-11</text><text x="1583.5" y="479" text-anchor="middle">08:00:00</text><text x="1664.5" y="464" text-anchor="middle">01-11</text><text x="1664.5" y="479" text-anchor="middle">10:00:00</text><text x="1745.5" y="464" text-anchor="middle">01-11</text><text x="1745.5" y="479" text-anchor="middle">12:00:00</text><text x="1826.5" y="464" text-anchor="middle">01-11</text><text x="1826.5" y="479" text-anchor="middle">14:00:00</text></g>
<text x="1088" y="498" font-family="Liberation Sans, sans-serif" font-size="12" fill="#999" text-anchor="middle">time</text>
<text x="1060" y="209" font-family="Liberation Sans, sans-serif" font-size="12" fill="#999" text-anchor="middle">Database Load</text>
<text transform="translate(237 335) rotate(-90)" font-family="Liberation Sans, sans-serif" font-size="12" fill="#999" text-anchor="middle">seconds / cpu</text>
</svg>
<svg class="abs" style="left:1851px;top:199px" width="14.5" height="15" viewBox="0 0 15 15"><g fill="#2b2b2b"><path d="M0 0 H5.5 L3.8 1.8 L0 5.5Z"/><path d="M15 0 V5.5 L13.2 3.8 L9.5 0Z"/><path d="M0 15 V9.5 L1.8 11.2 L5.5 15Z"/><path d="M15 15 H9.5 L11.2 13.2 L15 9.5Z"/></g><path d="M1.5 1.5 L13.5 13.5 M13.5 1.5 L1.5 13.5" stroke="#2b2b2b" stroke-width="1.6"/></svg>
<svg class="abs" style="left:1877px;top:200px" width="14" height="14" viewBox="0 0 15 14"><g fill="#585858"><rect x="0" y="0.3" width="15" height="2.6" rx="1.3"/><rect x="0" y="5.3" width="15" height="2.6" rx="1.3"/><rect x="0" y="10.3" width="15" height="2.6" rx="1.3"/></g></svg>

<div class="legend" style="left:582px"><span class="abs" style="left:0;top:7px;width:15px;height:2px;background:#3497ba"></span><span class="abs" style="left:21px;top:0">Elapsed Time</span></div>
<div class="legend" style="left:700px"><span class="abs" style="left:0;top:7px;width:15px;height:2px;background:#3aae6e"></span><span class="abs" style="left:21px;top:0">Cpu Time</span></div>
<div class="legend" style="left:796px"><span class="abs" style="left:0;top:7px;width:15px;height:2px;background:#f28fcb"></span><span class="abs" style="left:21px;top:0">IO, Lock, Wait time</span></div>
<div class="legend" style="left:946px"><span class="abs" style="left:0;top:1px;width:12px;height:12px;border-radius:6px;background:#dd9158"></span><span class="abs" style="left:21px;top:0">Server CPU</span></div>
<div class="legend" style="left:1057px"><span class="abs" style="left:0;top:4px;width:6px;height:6px;background:#a8211b"></span><span class="abs" style="left:16px;top:0">Alerts</span></div>
<div class="legend" style="left:1131px"><svg class="abs" style="left:0;top:1px" width="12" height="12" viewBox="0 0 12 12"><path d="M1 1.5 H11 L6 11.5Z" fill="#33cc00" stroke="#1d5b12" stroke-width="1"/></svg><span class="abs" style="left:18px;top:0">Plan Objects</span></div>
<div class="legend" style="left:1242px;color:#cfcfcf"><span class="abs" style="left:0;top:7px;width:15px;height:0;border-top:1px dashed #cfcfcf"></span><span class="abs" style="left:21px;top:0">Database CPU Count</span></div>
<div class="legend" style="left:1404px;color:#cfcfcf"><span class="abs" style="left:0;top:7px;width:15px;height:0;border-top:1px dashed #cfcfcf"></span><span class="abs" style="left:21px;top:0">Machine CPU count</span></div>

<div id="divbar"></div>
<div id="btabs">
<div class="bt act" style="left:0;width:118px">Sql Statements</div>
<div class="bt" style="left:118px;width:92px">Procedures</div>
<div class="bt" style="left:210px;width:61px">Waits</div>
<div class="bt" style="left:271px;width:131px">Alerts &amp; Anomalies</div>
<div class="bt" style="left:402px;width:99px">Plan Objects</div>
<div class="lbl" style="left:1162px;top:13px;font-size:13px;color:#888">Statements filter:</div>
<div class="sel" style="left:1277px;width:249px"><span class="abs" style="left:15px;top:0">Top 20 statements by Elapsed time</span><span class="caret" style="left:231px"></span></div>
<div class="sel" style="left:1548px;width:141px"><span class="abs" style="left:15px;top:0">UnGroup literals</span><span class="caret" style="left:122px"></span></div>
</div>
<div id="snap"><div class="sect" style="left:15px;top:9px">SNAPSHOT OF SQL STATEMENTS EXECUTED WITHIN 15 MINUTES AT 2022-01-10 12:56:33</div>
<div class="abs" style="left:1674px;top:0;width:1px;height:30px;background:#d9d9d9"></div>
<svg class="abs" style="left:1683px;top:8px" width="13" height="13" viewBox="0 0 16 16"><path fill="#888" d="M6.8 0h2.4l.4 2.2 1.4.6 1.9-1.3 1.7 1.7-1.3 1.9.6 1.4 2.1.4v2.4l-2.1.4-.6 1.4 1.3 1.9-1.7 1.7-1.9-1.3-1.4.6-.4 2.1H6.8l-.4-2.1-1.4-.6-1.9 1.3-1.7-1.7 1.3-1.9-.6-1.4L0 9.2V6.8l2.1-.4.6-1.4-1.3-1.9 1.7-1.7 1.9 1.3 1.4-.6zM8 5a3 3 0 100 6 3 3 0 000-6z"/></svg>
</div>
<div id="search"><svg class="abs" style="left:8px;top:7px" width="17" height="17" viewBox="0 0 17 17"><circle cx="6.6" cy="6.6" r="5.3" fill="none" stroke="#c4c4c4" stroke-width="1.9"/><path d="M10.5 10.5 L15 15" stroke="#c4c4c4" stroke-width="2.6" stroke-linecap="round"/></svg><span class="abs" style="left:30px;top:8px">Search statistic by sql text, hash value or plan hash in below snapshot table</span></div>

<div id="thead">
<div class="th" style="left:0px;width:181px"><div class="t">Query text</div><div class="u"></div></div>
<div class="th" style="left:180px;width:82px"><div class="t">Hash Value</div><div class="u"></div></div>
<div class="th" style="left:261px;width:83px"><div class="t">Sql Id</div><div class="u"></div></div>
<div class="th" style="left:343px;width:72px"><div class="t" style="padding-right:0">Plan Hash</div><div class="u"></div></div>
<div class="th" style="left:414px;width:98px"><div class="t" style="padding-right:0">Elapsed Time<svg width="7" height="4" style="margin-left:5px;vertical-align:2px"><path d="M0 0 H7 L3.5 4Z" fill="#111"/></svg></div><div class="u">[Seconds]</div></div>
<div class="th" style="left:511px;width:100px"><div class="t">Cpu Time</div><div class="u">[Seconds]</div></div>
<div class="th" style="left:610px;width:99px"><div class="t" style="padding-right:0">Time per 1 exec</div><div class="u">[Seconds]</div></div>
<div class="th" style="left:708px;width:99px"><div class="t">Sorts</div><div class="u">[Rows]</div></div>
<div class="th" style="left:806px;width:99px"><div class="t">Fetches</div><div class="u">[Rows]</div></div>
<div class="th" style="left:904px;width:99px"><div class="t">Executions</div><div class="u"></div></div>
<div class="th" style="left:1002px;width:98px"><div class="t">Parse Calls</div><div class="u"></div></div>
<div class="th" style="left:1099px;width:100px"><div class="t">Disk reads</div><div class="u">[Blocks]</div></div>
<div class="th" style="left:1198px;width:99px"><div class="t">Buffer gets</div><div class="u">[Blocks]</div></div>
<div class="th" style="left:1296px;width:99px"><div class="t" style="padding-right:0">Rows processed</div><div class="u">[Rows]</div></div>
<div class="th" style="left:1394px;width:99px"><div class="t">Module</div><div class="u"></div></div>
<div class="th" style="left:1492px;width:98px"><div class="t">Db Load</div><div class="u">[%]</div></div>
<div class="th" style="left:1589px;width:97px"><div class="t">Cpu Load</div><div class="u">[%]</div></div>
<div class="th" style="left:1686px;width:17px;border-right:none"></div>
</div>
<div class="row g" style="top:758px"><div class="td" style="left:0px;width:181px">DELETE FROM DOK_ZA WH...</div><div class="td" style="left:180px;width:82px;padding-left:3px">476627786</div><div class="td" style="left:261px;width:83px;padding-left:3px">2umd028f6j...</div><div class="td" style="left:343px;width:72px;padding-left:3px">42057038...</div><div class="td r" style="left:414px;width:98px">3 659.49</div><div class="td r" style="left:511px;width:100px">5.27</div><div class="td r" style="left:610px;width:99px">2.3250</div><div class="td r" style="left:708px;width:99px">0</div><div class="td r" style="left:806px;width:99px">0</div><div class="td r" style="left:904px;width:99px">1 574</div><div class="td r" style="left:1002px;width:98px">581</div><div class="td r" style="left:1099px;width:100px">7 567</div><div class="td r" style="left:1198px;width:99px">491 936</div><div class="td r" style="left:1296px;width:99px">1 574</div><div class="td" style="left:1394px;width:99px;padding-left:3px">INT</div><div class="td r" style="left:1492px;width:98px">4</div><div class="td r" style="left:1589px;width:97px">0</div></div>
<div class="row" style="top:788px"><div class="td" style="left:0px;width:181px">select ofe_d.id, substr(ofe_d.o...</div><div class="td" style="left:180px;width:82px;padding-left:3px">2109885430</div><div class="td" style="left:261px;width:83px;padding-left:3px">a3g88k5yw...</div><div class="td" style="left:343px;width:72px;padding-left:3px">38887048...</div><div class="td r" style="left:414px;width:98px">2 948.26</div><div class="td r" style="left:511px;width:100px">1 805.01</div><div class="td r" style="left:610px;width:99px">0.0080</div><div class="td r" style="left:708px;width:99px">366 561</div><div class="td r" style="left:806px;width:99px">365 690</div><div class="td r" style="left:904px;width:99px">366 581</div><div class="td r" style="left:1002px;width:98px">2 381</div><div class="td r" style="left:1099px;width:100px">1</div><div class="td r" style="left:1198px;width:99px">401 200 123</div><div class="td r" style="left:1296px;width:99px">16 952</div><div class="td" style="left:1394px;width:99px;padding-left:3px">JDBC Thin Client</div><div class="td r" style="left:1492px;width:98px">3</div><div class="td r" style="left:1589px;width:97px">4</div></div>
<div class="row" style="top:818px"><div class="td" style="left:0px;width:181px">SELECT /*+ */ ROWID,WSK_...</div><div class="td" style="left:180px;width:82px;padding-left:3px">575225607</div><div class="td" style="left:261px;width:83px;padding-left:3px">80q6cp4j4k...</div><div class="td" style="left:343px;width:72px;padding-left:3px">2941142135</div><div class="td r" style="left:414px;width:98px">1 365.47</div><div class="td r" style="left:511px;width:100px">507.61</div><div class="td r" style="left:610px;width:99px">0.6743</div><div class="td r" style="left:708px;width:99px">0</div><div class="td r" style="left:806px;width:99px">2 102</div><div class="td r" style="left:904px;width:99px">2 025</div><div class="td r" style="left:1002px;width:98px">631</div><div class="td r" style="left:1099px;width:100px">619 003</div><div class="td r" style="left:1198px;width:99px">32 231 637</div><div class="td r" style="left:1296px;width:99px">28 131</div><div class="td" style="left:1394px;width:99px;padding-left:3px">SP_DOK</div><div class="td r" style="left:1492px;width:98px">1</div><div class="td r" style="left:1589px;width:97px">1</div></div>
<div class="row" style="top:848px"><div class="td" style="left:0px;width:181px"></div><div class="td" style="left:180px;width:82px;padding-left:3px"></div><div class="td" style="left:261px;width:83px;padding-left:3px"></div><div class="td" style="left:343px;width:72px;padding-left:3px"></div><div class="td r" style="left:414px;width:98px"></div><div class="td r" style="left:511px;width:100px"></div><div class="td r" style="left:610px;width:99px"></div><div class="td r" style="left:708px;width:99px"></div><div class="td r" style="left:806px;width:99px"></div><div class="td r" style="left:904px;width:99px"></div><div class="td r" style="left:1002px;width:98px"></div><div class="td r" style="left:1099px;width:100px"></div><div class="td r" style="left:1198px;width:99px"></div><div class="td r" style="left:1296px;width:99px"></div><div class="td" style="left:1394px;width:99px;padding-left:3px"></div><div class="td r" style="left:1492px;width:98px"></div><div class="td r" style="left:1589px;width:97px"></div></div>

<div id="vscroll"></div><div id="vthumb"></div>
<div class="arr" style="left:1907px;top:91px"></div>
<div id="tscroll"></div><div id="tthumb"></div>
<div class="arr" style="left:1890px;top:764px"></div>
</body></html>
